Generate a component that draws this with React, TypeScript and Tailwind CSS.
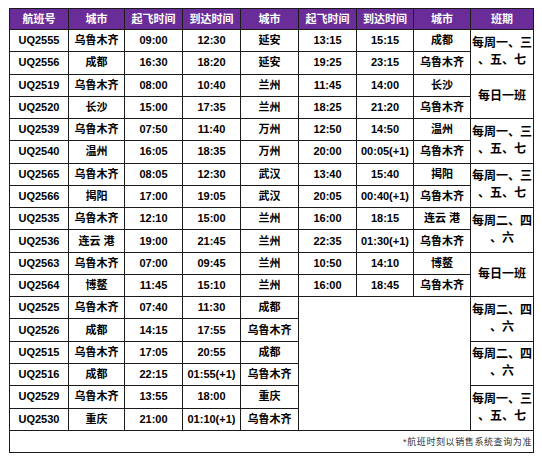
import React from "react";

const rows: string[][] = [
  ["UQ2555", "乌鲁木齐", "09:00", "12:30", "延安", "13:15", "15:15", "成都"],
  ["UQ2556", "成都", "16:30", "18:20", "延安", "19:25", "23:15", "乌鲁木齐"],
  ["UQ2519", "乌鲁木齐", "08:00", "10:40", "兰州", "11:45", "14:00", "长沙"],
  ["UQ2520", "长沙", "15:00", "17:35", "兰州", "18:25", "21:20", "乌鲁木齐"],
  ["UQ2539", "乌鲁木齐", "07:50", "11:40", "万州", "12:50", "14:50", "温州"],
  ["UQ2540", "温州", "16:05", "18:35", "万州", "20:00", "00:05(+1)", "乌鲁木齐"],
  ["UQ2565", "乌鲁木齐", "08:05", "12:30", "武汉", "13:40", "15:40", "揭阳"],
  ["UQ2566", "揭阳", "17:00", "19:05", "武汉", "20:05", "00:40(+1)", "乌鲁木齐"],
  ["UQ2535", "乌鲁木齐", "12:10", "15:00", "兰州", "16:00", "18:15", "连云 港"],
  ["UQ2536", "连云 港", "19:00", "21:45", "兰州", "22:35", "01:30(+1)", "乌鲁木齐"],
  ["UQ2563", "乌鲁木齐", "07:00", "09:45", "兰州", "10:50", "14:10", "博鳌"],
  ["UQ2564", "博鳌", "11:45", "15:10", "兰州", "16:00", "18:45", "乌鲁木齐"],
  ["UQ2525", "乌鲁木齐", "07:40", "11:30", "成都"],
  ["UQ2526", "成都", "14:15", "17:55", "乌鲁木齐"],
  ["UQ2515", "乌鲁木齐", "17:05", "20:55", "成都"],
  ["UQ2516", "成都", "22:15", "01:55(+1)", "乌鲁木齐"],
  ["UQ2529", "乌鲁木齐", "13:55", "18:00", "重庆"],
  ["UQ2530", "重庆", "21:00", "01:10(+1)", "乌鲁木齐"],
];

const A: [string, string] = ["每周一、三", "、五、七"];
const B: [string] = ["每日一班"];
const C: [string, string] = ["每周二、四", "、六"];
const schedules: string[][] = [A, B, A, A, C, B, C, C, A];

const headers = ["航班号", "城市", "起飞时间", "到达时间", "城市", "起飞时间", "到达时间", "城市", "班期"];
const widths = [59, 56, 58, 58, 58, 58, 57, 57, 63];

const cell = "border border-[#1a1a1a] text-center align-middle p-0 whitespace-nowrap";

export default function App() {
  return (
    <div className="w-[542px] h-[459px] bg-white pt-[8px] pl-[9px]" style={{ fontFamily: '"Liberation Sans", "Noto Sans CJK SC", sans-serif' }}>
      <table className="border-collapse table-fixed w-[525px] text-[11px] font-bold text-black leading-none">
        <colgroup>
          {widths.map((w, i) => (
            <col key={i} style={{ width: w }} />
          ))}
        </colgroup>
        <thead>
          <tr className="h-[21px] bg-[#6a2c99]">
            {headers.map((h, i) => (
              <th key={i} className={`${cell} text-white font-bold text-[11px]`}>
                {h}
              </th>
            ))}
          </tr>
        </thead>
        <tbody>
          {rows.map((r, i) => (
            <tr key={i} className="h-[22.28px]">
              {r.map((c, j) => (
                <td key={j} className={cell}>
                  {c}
                </td>
              ))}
              {i === 12 && <td rowSpan={6} colSpan={3} className={cell}></td>}
              {i % 2 === 0 && (
                <td rowSpan={2} className={`${cell} text-[12px] leading-[17px]`}>
                  {schedules[i / 2].map((l, k) => (
                    <div key={k}>{l}</div>
                  ))}
                </td>
              )}
            </tr>
          ))}
          <tr className="h-[22px]">
            <td colSpan={9} className="border border-[#1a1a1a] p-0 pr-[1px] text-right align-middle">
              <span className="text-[9px] font-normal text-[#333] tracking-[0.6px]">*航班时刻以销售系统查询为准</span>
            </td>
          </tr>
        </tbody>
      </table>
    </div>
  );
}
